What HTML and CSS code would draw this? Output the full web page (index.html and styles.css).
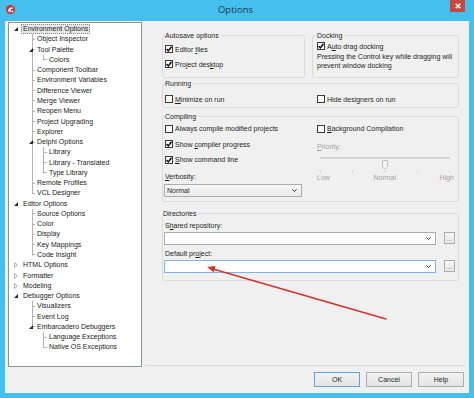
FILE: index.html
```html
<!DOCTYPE html>
<html lang="en">
<head>
<meta charset="utf-8">
<title>Options</title>
<link rel="stylesheet" href="styles.css">
</head>
<body>
<div class="window">
  <div class="titlebar">
    <div class="tb-left">
      <svg class="app-icon" width="9" height="9" viewBox="0 0 9 9"><circle cx="4.5" cy="4.5" r="4.5" fill="#d8302c"/><path d="M2 6.6 C2 3.6 3.6 2 6.6 2.2 L6.6 4 L5 4 L5 6.8 Z" fill="#fff"/><circle cx="6.3" cy="6.4" r="0.9" fill="#fff"/></svg>
    </div>
    <div class="tb-title">Options</div>
    <div class="tb-right">
      <div class="close"><svg width="6" height="6" viewBox="0 0 6 6"><path d="M0.7 0.7 L5.3 5.3 M5.3 0.7 L0.7 5.3" stroke="#fff" stroke-width="1.6"/></svg></div>
    </div>
  </div>

  <div class="client">
    <div class="main">
      <div class="tree">
        <div class="r"><span class="x"><svg width="4" height="4" viewBox="0 0 4 4"><path d="M4 0 L4 4 L0 4 Z" fill="#262626"/></svg></span><span class="t sel">Environment Options</span></div>
        <div class="r"><span class="sp"></span><span class="c1 tee"></span><span class="t">Object Inspector</span></div>
        <div class="r"><span class="sp"></span><span class="c1 tee ex"><svg width="4" height="4" viewBox="0 0 4 4"><path d="M4 0 L4 4 L0 4 Z" fill="#262626"/></svg></span><span class="t">Tool Palette</span></div>
        <div class="r"><span class="sp"></span><span class="c1 pipe"></span><span class="c2 elb"></span><span class="t">Colors</span></div>
        <div class="r"><span class="sp"></span><span class="c1 tee"></span><span class="t">Component Toolbar</span></div>
        <div class="r"><span class="sp"></span><span class="c1 tee"></span><span class="t">Environment Variables</span></div>
        <div class="r"><span class="sp"></span><span class="c1 tee"></span><span class="t">Difference Viewer</span></div>
        <div class="r"><span class="sp"></span><span class="c1 tee"></span><span class="t">Merge Viewer</span></div>
        <div class="r"><span class="sp"></span><span class="c1 tee"></span><span class="t">Reopen Menu</span></div>
        <div class="r"><span class="sp"></span><span class="c1 tee"></span><span class="t">Project Upgrading</span></div>
        <div class="r"><span class="sp"></span><span class="c1 tee"></span><span class="t">Explorer</span></div>
        <div class="r"><span class="sp"></span><span class="c1 tee ex"><svg width="4" height="4" viewBox="0 0 4 4"><path d="M4 0 L4 4 L0 4 Z" fill="#262626"/></svg></span><span class="t">Delphi Options</span></div>
        <div class="r"><span class="sp"></span><span class="c1 pipe"></span><span class="c2 tee"></span><span class="t">Library</span></div>
        <div class="r"><span class="sp"></span><span class="c1 pipe"></span><span class="c2 tee"></span><span class="t">Library - Translated</span></div>
        <div class="r"><span class="sp"></span><span class="c1 pipe"></span><span class="c2 elb"></span><span class="t">Type Library</span></div>
        <div class="r"><span class="sp"></span><span class="c1 tee"></span><span class="t">Remote Profiles</span></div>
        <div class="r"><span class="sp"></span><span class="c1 elb"></span><span class="t">VCL Designer</span></div>
        <div class="r"><span class="x"><svg width="4" height="4" viewBox="0 0 4 4"><path d="M4 0 L4 4 L0 4 Z" fill="#262626"/></svg></span><span class="t">Editor Options</span></div>
        <div class="r"><span class="sp"></span><span class="c1 tee"></span><span class="t">Source Options</span></div>
        <div class="r"><span class="sp"></span><span class="c1 tee"></span><span class="t">Color</span></div>
        <div class="r"><span class="sp"></span><span class="c1 tee"></span><span class="t">Display</span></div>
        <div class="r"><span class="sp"></span><span class="c1 tee"></span><span class="t">Key Mappings</span></div>
        <div class="r"><span class="sp"></span><span class="c1 elb"></span><span class="t">Code Insight</span></div>
        <div class="r"><span class="x"><svg width="4" height="6" viewBox="0 0 4 6"><path d="M0.5 0.5 L3.5 3 L0.5 5.5 Z" fill="none" stroke="#a8a8a8" stroke-width="0.9"/></svg></span><span class="t">HTML Options</span></div>
        <div class="r"><span class="x"><svg width="4" height="6" viewBox="0 0 4 6"><path d="M0.5 0.5 L3.5 3 L0.5 5.5 Z" fill="none" stroke="#a8a8a8" stroke-width="0.9"/></svg></span><span class="t">Formatter</span></div>
        <div class="r"><span class="x"><svg width="4" height="6" viewBox="0 0 4 6"><path d="M0.5 0.5 L3.5 3 L0.5 5.5 Z" fill="none" stroke="#a8a8a8" stroke-width="0.9"/></svg></span><span class="t">Modeling</span></div>
        <div class="r"><span class="x"><svg width="4" height="4" viewBox="0 0 4 4"><path d="M4 0 L4 4 L0 4 Z" fill="#262626"/></svg></span><span class="t">Debugger Options</span></div>
        <div class="r"><span class="sp"></span><span class="c1 tee"></span><span class="t">Visualizers</span></div>
        <div class="r"><span class="sp"></span><span class="c1 tee"></span><span class="t">Event Log</span></div>
        <div class="r"><span class="sp"></span><span class="c1 elb ex"><svg width="4" height="4" viewBox="0 0 4 4"><path d="M4 0 L4 4 L0 4 Z" fill="#262626"/></svg></span><span class="t">Embarcadero Debuggers</span></div>
        <div class="r"><span class="sp"></span><span class="c1"></span><span class="c2 tee"></span><span class="t">Language Exceptions</span></div>
        <div class="r"><span class="sp"></span><span class="c1"></span><span class="c2 elb"></span><span class="t">Native OS Exceptions</span></div>
      </div>

      <div class="pages">
        <div class="grp-row">
          <div class="grp autosave">
            <div class="grp-title">Autosave options</div>
            <div class="rows-a">
              <div class="chk"><span class="cb on"><svg width="6" height="6" viewBox="0 0 6 6"><path d="M0.6 3.1 L2.3 4.9 L5.5 0.8" fill="none" stroke="#111" stroke-width="1.5"/></svg></span><span>Editor <u>f</u>iles</span></div>
              <div class="chk"><span class="cb on"><svg width="6" height="6" viewBox="0 0 6 6"><path d="M0.6 3.1 L2.3 4.9 L5.5 0.8" fill="none" stroke="#111" stroke-width="1.5"/></svg></span><span>Project des<u>k</u>top</span></div>
            </div>
          </div>
          <div class="grp docking">
            <div class="grp-title">Docking</div>
            <div class="chk tight"><span class="cb on"><svg width="6" height="6" viewBox="0 0 6 6"><path d="M0.6 3.1 L2.3 4.9 L5.5 0.8" fill="none" stroke="#111" stroke-width="1.5"/></svg></span><span>A<u>u</u>to drag docking</span></div>
            <p class="note">Pressing the Control key while dragging will prevent window docking</p>
          </div>
        </div>

        <div class="grp running">
          <div class="grp-title">Running</div>
          <div class="two-col">
            <div class="chk"><span class="cb"></span><span><u>M</u>inimize on run</span></div>
            <div class="chk"><span class="cb"></span><span>Hide desi<u>g</u>ners on run</span></div>
          </div>
        </div>

        <div class="grp compiling">
          <div class="grp-title">Compiling</div>
          <div class="two-col">
            <div class="col">
              <div class="chk c15"><span class="cb"></span><span>Always compile modified projects</span></div>
              <div class="chk c15"><span class="cb on"><svg width="6" height="6" viewBox="0 0 6 6"><path d="M0.6 3.1 L2.3 4.9 L5.5 0.8" fill="none" stroke="#111" stroke-width="1.5"/></svg></span><span>Show <u>c</u>ompiler progress</span></div>
              <div class="chk c15"><span class="cb on"><svg width="6" height="6" viewBox="0 0 6 6"><path d="M0.6 3.1 L2.3 4.9 L5.5 0.8" fill="none" stroke="#111" stroke-width="1.5"/></svg></span><span><u>S</u>how command line</span></div>
              <div class="lbl verb"><u>V</u>erbosity:</div>
              <div class="combo dd">
                <span class="val">Normal</span>
                <svg width="5" height="3" viewBox="0 0 5 3"><path d="M0.4 0.4 L2.5 2.5 L4.6 0.4" fill="none" stroke="#333" stroke-width="1"/></svg>
              </div>
            </div>
            <div class="col">
              <div class="chk c15"><span class="cb"></span><span><u>B</u>ackground Compilation</span></div>
              <div class="lbl dis prio"><u>P</u>riority:</div>
              <div class="slider">
                <div class="track"></div>
                <svg class="thumb" width="6" height="10" viewBox="0 0 6 10"><path d="M0.5 0.5 H5.5 V6.8 L3 9.4 L0.5 6.8 Z" fill="#f4f4f4" stroke="#bdbdbd" stroke-width="1"/></svg>
              </div>
              <div class="ticks"><i></i><i></i><i></i><i></i><i></i></div>
              <div class="tick-labels dis"><span>Low</span><span>Normal</span><span>High</span></div>
            </div>
          </div>
        </div>

        <div class="grp dirs">
          <div class="grp-title">Directories</div>
          <div class="lbl d1">S<u>h</u>ared repository:</div>
          <div class="combo-row">
            <div class="combo"><span class="val"></span><svg width="5" height="3" viewBox="0 0 5 3"><path d="M0.4 0.4 L2.5 2.5 L4.6 0.4" fill="none" stroke="#333" stroke-width="1"/></svg></div>
            <div class="dots">...</div>
          </div>
          <div class="lbl d2">Default pr<u>o</u>ject:</div>
          <div class="combo-row">
            <div class="combo focus"><span class="val"></span><svg width="5" height="3" viewBox="0 0 5 3"><path d="M0.4 0.4 L2.5 2.5 L4.6 0.4" fill="none" stroke="#333" stroke-width="1"/></svg></div>
            <div class="dots">...</div>
          </div>
        </div>
      </div>
    </div>

    <div class="buttons">
      <div class="btn def">OK</div>
      <div class="btn">Cancel</div>
      <div class="btn">Help</div>
    </div>
  </div>
</div>

<svg class="arrow" width="474" height="398" viewBox="0 0 474 398">
  <line x1="386" y1="319" x2="213" y2="269" stroke="#d6302a" stroke-width="1.4" stroke-linecap="round"/>
  <path d="M207 267 L215.6 266.1 L213.8 272.3 Z" fill="#d6302a"/>
</svg>
</body>
</html>
```

FILE: styles.css
```css
* { box-sizing: border-box; }
html, body { margin: 0; padding: 0; }
body {
  width: 474px;
  height: 398px;
  overflow: hidden;
  position: relative;
  background: #45bfee;
  font-family: "Liberation Sans", Arial, sans-serif;
  font-size: 7px;
  color: #1e1e1e;
}
u { text-decoration-thickness: 1px; text-underline-offset: 1px; }

.window { display: flex; flex-direction: column; height: 398px; }

/* title bar */
.titlebar {
  height: 21px;
  display: grid;
  grid-template-columns: 1fr auto 1fr;
  padding: 0 9px 0 6px;
}
.tb-left { display: flex; align-items: flex-start; padding-top: 5px; }
.tb-title {
  font-family: "Open Sans", "Noto Sans", sans-serif;
  font-size: 9.5px;
  line-height: 19px;
  color: #1d3846;
}
.tb-right { display: flex; justify-content: flex-end; }
.close {
  width: 15px;
  height: 12px;
  background: #c9483b;
  display: flex;
  align-items: center;
  justify-content: center;
}

/* client */
.client {
  flex: 1;
  margin: 0 5px 5px;
  background: #f0f0f0;
  padding: 1px 4px 0 3px;
  display: flex;
  flex-direction: column;
}
.main { display: flex; height: 345px; }

/* tree */
.tree {
  width: 134px;
  height: 345px;
  background: #fff;
  border: 1px solid #8e9197;
  padding-top: 1px;
  overflow: hidden;
  color: #1b1b1b;
}
.r {
  height: 10.27px;
  display: flex;
  align-items: stretch;
  padding-left: 2px;
  white-space: nowrap;
}
.x { width: 10px; display: flex; align-items: center; justify-content: center; }
.sp { width: 16px; }
.c1, .c2 { display: flex; align-items: center; }
.c1 { width: 8px; }
.c2 { width: 12px; }
.ex svg { margin-left: 2px; }
.t {
  align-self: center;
  line-height: 8px;
  padding: 0 1px;
  border: 1px solid transparent;
}
.t.sel { background: #e6e6e6; border: 1px dotted #8a8a8a; }

.c1.pipe { background: linear-gradient(#b3b3b3, #b3b3b3) 5px 0 / 1px 100% no-repeat; }
.c1.tee {
  background:
    linear-gradient(#b3b3b3, #b3b3b3) 5px 0 / 1px 100% no-repeat,
    linear-gradient(#b3b3b3, #b3b3b3) 5px 50% / 3px 1px no-repeat;
}
.c1.elb {
  background:
    linear-gradient(#b3b3b3, #b3b3b3) 5px 0 / 1px 55% no-repeat,
    linear-gradient(#b3b3b3, #b3b3b3) 5px 50% / 3px 1px no-repeat;
}
.c2.tee {
  background:
    linear-gradient(#b3b3b3, #b3b3b3) 8px 0 / 1px 100% no-repeat,
    linear-gradient(#b3b3b3, #b3b3b3) 8px 50% / 4px 1px no-repeat;
}
.c2.elb {
  background:
    linear-gradient(#b3b3b3, #b3b3b3) 8px 0 / 1px 55% no-repeat,
    linear-gradient(#b3b3b3, #b3b3b3) 8px 50% / 4px 1px no-repeat;
}

/* right pages */
.pages {
  flex: 1;
  margin-left: 3px;
  height: 344px;
  border-bottom: 1px solid #d8d8d8;
  padding: 13px 6px 0 17px;
}
.grp {
  border: 1px solid #dadada;
  border-radius: 3px;
}
.grp-title {
  width: max-content;
  height: 9px;
  line-height: 9px;
  margin-top: -5px;
  padding: 0 2px 0 0;
  background: #f0f0f0;
}
.grp-row { display: flex; gap: 7px; }
.autosave { width: 143px; height: 43px; padding-left: 2px; }
.docking { flex: 1; height: 43px; padding-left: 4px; }
.rows-a { margin-top: 1.5px; }

.chk { display: flex; align-items: center; height: 15px; white-space: nowrap; }
.chk.tight { height: 12px; }
.chk.c15 { height: 15.5px; }
.cb {
  width: 8px;
  height: 8px;
  border: 1px solid #3a3a3a;
  background: #fff;
  margin-right: 2px;
  display: flex;
  align-items: center;
  justify-content: center;
  flex: none;
}
.note { margin: 1px 0 0; line-height: 8.5px; }

.running { margin-top: 5px; height: 25px; padding-left: 2px; }
.running .two-col { margin-top: 3.5px; }
.two-col { display: grid; grid-template-columns: 152px 1fr; }

.compiling { margin-top: 8px; height: 86px; padding-left: 2px; padding-right: 4px; }
.lbl { line-height: 9px; white-space: nowrap; }
.verb { margin-top: 4px; }
.dis { color: #a2a2a2; }
.prio { margin-top: 5px; }

.combo {
  height: 13px;
  border: 1px solid #abadb3;
  background: #fff;
  display: flex;
  align-items: center;
  justify-content: space-between;
  padding: 0 4px 0 2px;
}
.combo.dd {
  margin-top: 3.5px;
  margin-left: -1px;
  width: 138px;
  background: linear-gradient(#f7f7f7, #ebebeb);
  border-color: #acacac;
}
.combo.focus { border-color: #7eb4ea; }

.slider { position: relative; height: 14px; width: 136px; }
.track {
  margin: 6.5px 3px 0;
  height: 2px;
  background: #dadada;
  border-top: 1px solid #cfcfcf;
}
.thumb { position: absolute; left: 65px; top: 2.5px; }
.ticks {
  width: 136px;
  height: 2px;
  display: flex;
  justify-content: space-between;
  padding: 0 3px;
}
.ticks i { width: 1px; height: 1px; background: #b5b5b5; }
.tick-labels {
  width: 137px;
  display: flex;
  justify-content: space-between;
  line-height: 9px;
}

.dirs { margin-top: 11px; height: 68px; padding: 0 3px 0 1px; }
.dirs .grp-title { margin-left: -1px; }
.d1 { margin-top: 2.5px; padding-left: 1px; }
.d2 { margin-top: 3.5px; padding-left: 1px; }
.combo-row { display: flex; gap: 8px; margin-top: 2.5px; }
.combo-row .combo { flex: 1; }
.dots {
  width: 11px;
  height: 12px;
  border: 1px solid #adadad;
  background: linear-gradient(#f6f6f6, #e6e6e6);
  font-size: 6px;
  line-height: 12px;
  text-align: center;
  color: #555;
}

/* buttons */
.buttons {
  display: flex;
  justify-content: flex-end;
  gap: 6px;
  padding: 5px 1px 0 0;
}
.btn {
  width: 46px;
  height: 15px;
  border: 1px solid #adadad;
  background: linear-gradient(#f2f2f2, #e4e4e4);
  text-align: center;
  line-height: 13px;
}
.btn.def { border-color: #5fa3dc; }

.arrow { position: absolute; left: 0; top: 0; pointer-events: none; }
```
